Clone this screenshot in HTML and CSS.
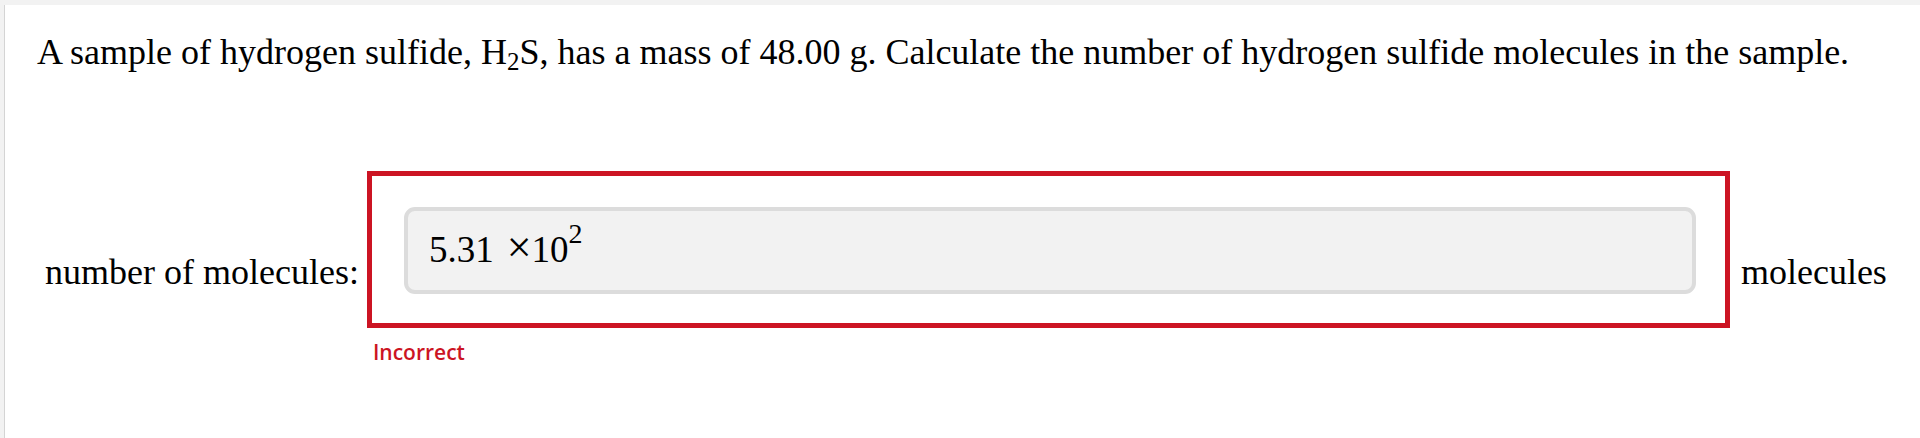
FILE: index.html
```html
<!DOCTYPE html>
<html>
<head>
<meta charset="utf-8">
<link rel="stylesheet" href="styles.css">
</head>
<body>
<div class="panel">
  <p class="question">A sample of hydrogen sulfide, H<sub class="sub">2</sub>S, has a mass of 48.00 g. Calculate the number of hydrogen sulfide molecules in the sample.</p>
  <div class="answer-row">
    <span class="label">number of molecules:</span>
    <div class="answer-col">
      <div class="answer-box">
        <div class="input"><span class="num">5.31</span><span class="times"><span class="cross">×</span>10<sup class="sup">2</sup></span></div>
      </div>
      <div class="feedback">Incorrect</div>
    </div>
    <span class="unit">molecules</span>
  </div>
</div>
</body>
</html>
```
FILE: styles.css
```css
html, body {
  margin: 0;
  padding: 0;
}
body {
  background: #f2f2f2;
  width: 1920px;
  height: 438px;
  overflow: hidden;
  font-family: "Liberation Serif", "Times New Roman", serif;
  color: #000;
}
.panel {
  margin: 5px 0 0 4px;
  border-left: 1px solid #d4d4d4;
  background: #fff;
  height: 433px;
  padding: 27px 0 0 32px;
  box-sizing: border-box;
}
.question {
  margin: 0;
  font-size: 36px;
  line-height: 40px;
}
.sub {
  font-size: 25px;
  line-height: 0;
  vertical-align: -6px;
}
.answer-row {
  display: flex;
  align-items: flex-start;
  margin: 99px 0 0 8px;
}
.label, .unit {
  font-size: 36px;
  line-height: 40px;
  margin-top: 81px;
}
.answer-col {
  display: flex;
  flex-direction: column;
  margin-left: 8px;
  margin-right: 11px;
}
.answer-box {
  width: 1363px;
  box-sizing: border-box;
  border: 5px solid #cc1423;
  padding: 31px 29px 29px 32px;
}
.input {
  border: 4px solid #dcdcdc;
  border-radius: 11px;
  background: #f2f2f2;
  padding: 19px 21px 20px;
  font-size: 37px;
  line-height: 40px;
}
.times {
  margin-left: 13px;
}
.cross {
  font-size: 44px;
  line-height: 0;
}
.sup {
  font-size: 28px;
  line-height: 0;
  vertical-align: 19px;
}
.feedback {
  font-family: "Open Sans", Lato, sans-serif;
  font-weight: 600;
  font-size: 21px;
  line-height: 24px;
  color: #cc1423;
  margin: 12px 0 0 6px;
}
```
